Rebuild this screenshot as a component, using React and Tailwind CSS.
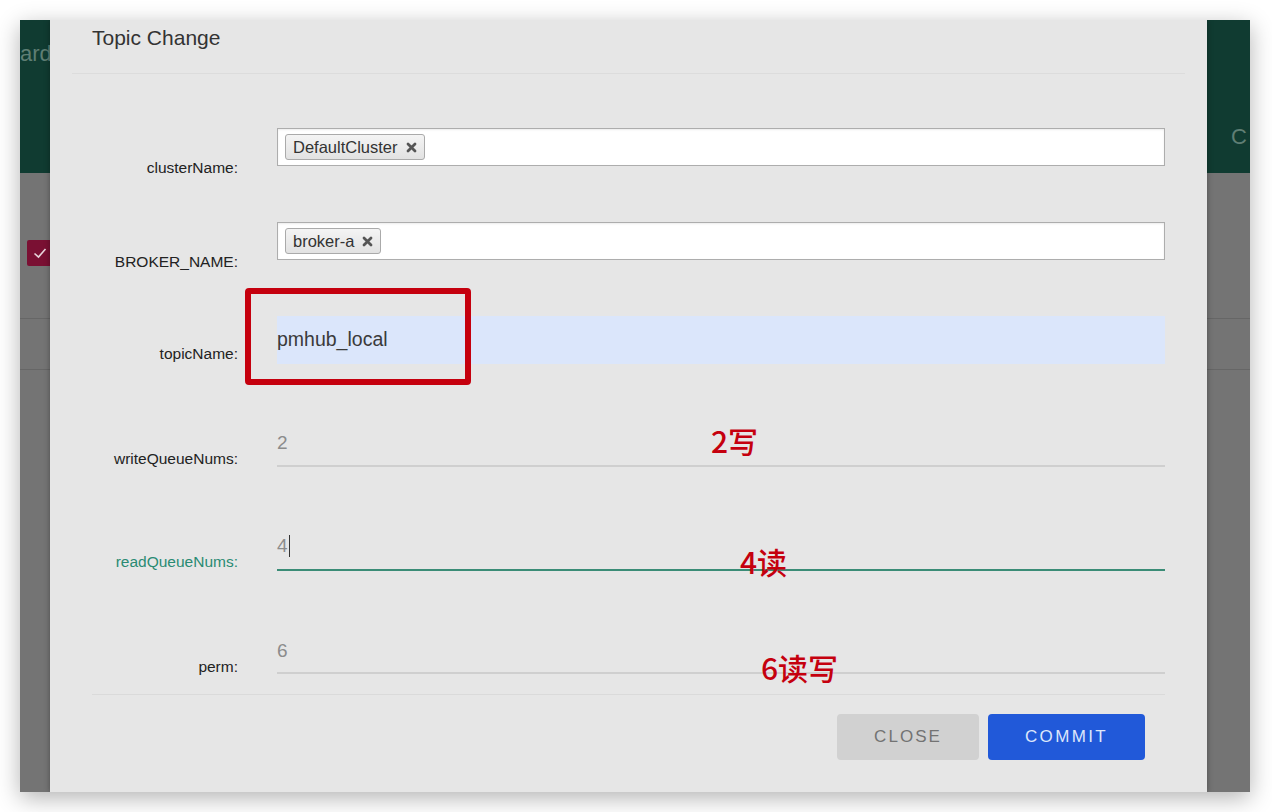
import React from 'react';

const FONT = { fontFamily: '"Liberation Sans", Arial, "Noto Sans CJK SC", sans-serif' };
const CJK = { fontFamily: '"Noto Sans CJK SC", "Liberation Sans", sans-serif' };

function XIcon() {
  return (
    <svg width="11" height="11" viewBox="0 0 11 11" className="ml-[8px]">
      <path d="M2 2 L9 9 M9 2 L2 9" stroke="#555" strokeWidth="2.8" strokeLinecap="round" />
    </svg>
  );
}

function Tag({ label }) {
  return (
    <div className="flex items-center h-[26px] px-[7px] rounded-[3px] border border-[#aaa] bg-gradient-to-b from-[#f4f4f4] to-[#e2e2e2] text-[16.5px] text-[#333]">
      <span>{label}</span>
      <XIcon />
    </div>
  );
}

function TagRow({ label, tag, first }) {
  return (
    <div className={`flex items-start ${first ? 'mt-[54px]' : 'mt-[44px]'}`}>
      <div className="w-[188px] text-right pt-[30px] leading-[20px] text-[15.5px] text-[#222]">{label}</div>
      <div className="ml-[39px] mr-[42px] flex-1 h-[38px] bg-white border border-[#adadad] shadow-[inset_0_1px_2px_rgba(0,0,0,0.08)] flex items-center px-[7px]">
        <Tag label={tag} />
      </div>
    </div>
  );
}

function LineRow({ label, value, mt, h, active }) {
  return (
    <div className={`flex items-start ${mt}`}>
      <div className={`w-[188px] text-right pt-[20px] leading-[20px] text-[15.5px] ${active ? 'text-[#2a8b73]' : 'text-[#222]'}`}>{label}</div>
      <div className={`ml-[39px] mr-[42px] flex-1 ${h} border-b-2 ${active ? 'border-[#3a8c76]' : 'border-[#cfcfcf]'}`}>
        <div className="flex items-center leading-[28px] text-[19px] text-[#8c8c8c]">
          <span>{value}</span>
          {active && <span className="ml-[1px] inline-block w-px h-[22px] bg-[#333]" />}
        </div>
      </div>
    </div>
  );
}

export default function App() {
  return (
    <div className="w-[1272px] h-[812px] bg-white p-[20px]" style={FONT}>
      <div className="relative w-[1230px] h-[772px] overflow-hidden bg-[#747474] shadow-[0_6px_22px_rgba(0,0,0,0.3)]">
        {/* dimmed app behind the dialog */}
        <div className="h-[153px] bg-[#103b31] flex justify-between text-[22px] text-[#5f7e74]">
          <div className="pt-[17px]">ard</div>
          <div className="pt-[100px] pr-[3px]">C</div>
        </div>
        <div className="h-[67px]" />
        <div className="pl-[7px] h-[25px]">
          <div className="w-[26px] h-[26px] rounded-[2px] bg-[#7a1033] flex items-center justify-center">
            <svg width="16" height="16" viewBox="0 0 16 16">
              <path d="M2.5 8.5 L6.5 12 L13.5 4" stroke="#e8d6dc" strokeWidth="1.6" fill="none" />
            </svg>
          </div>
        </div>
        <div className="mt-[53px] h-px bg-[#666]" />
        <div className="mt-[50px] h-px bg-[#666]" />

        {/* dialog */}
        <div className="absolute left-[30px] top-0 w-[1157px] h-[772px] bg-[#e6e6e6] shadow-[0_0_6px_rgba(0,0,0,0.35)] flex flex-col">
          <div className="h-[53px] pl-[42px] pt-[4px] leading-[28px] text-[21px] text-[#333]">Topic Change</div>
          <div className="mx-[22px] h-px bg-[#dcdcdc]" />

          <TagRow label="clusterName:" tag="DefaultCluster" first />
          <TagRow label="BROKER_NAME:" tag="broker-a" />

          <div className="flex items-start mt-[44px]">
            <div className="w-[188px] text-right pt-[28px] leading-[20px] text-[15.5px] text-[#222]">topicName:</div>
            <div className="ml-[39px] mr-[42px] flex-1 h-[48px] bg-[#dbe6fb] flex items-center text-[19.5px] text-[#3a3a3a]">
              pmhub_local
            </div>
          </div>

          <LineRow label="writeQueueNums:" value="2" mt="mt-[65px]" h="h-[38px]" />
          <LineRow label="readQueueNums:" value="4" mt="mt-[63px]" h="h-[39px]" active />
          <LineRow label="perm:" value="6" mt="mt-[65px]" h="h-[37px]" />

          <div className="mt-[17px] mx-[42px] h-px bg-[#dadada]" />

          <div className="mt-[19px] mr-[62px] flex justify-end gap-[9px]">
            <button className="w-[142px] h-[46px] rounded-[4px] bg-[#d1d1d1] text-[17px] tracking-[0.12em] text-[#737373]">CLOSE</button>
            <button className="w-[157px] h-[46px] rounded-[4px] bg-[#2159d9] text-[17px] tracking-[0.14em] text-[#dde6fb]">COMMIT</button>
          </div>

          {/* annotations */}
          <div className="absolute left-[195px] top-[268px] w-[226px] h-[97px] border-[6px] border-[#c5000e] rounded-[4px]" />
          <div className="absolute left-[661px] top-[400px] leading-[40px] text-[30px] font-medium text-[#c5000e]" style={CJK}>2写</div>
          <div className="absolute left-[690px] top-[521px] leading-[40px] text-[30px] font-medium text-[#c5000e]" style={CJK}>4读</div>
          <div className="absolute left-[711px] top-[627px] leading-[40px] text-[30px] font-medium text-[#c5000e]" style={CJK}>6读写</div>
        </div>
      </div>
    </div>
  );
}
